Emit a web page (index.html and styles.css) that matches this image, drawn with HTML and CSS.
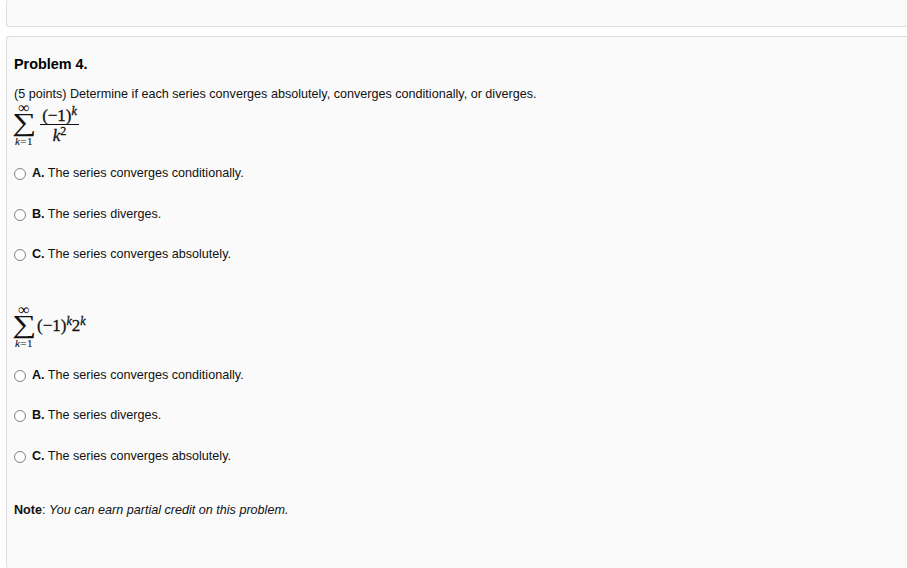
FILE: index.html
```html
<!DOCTYPE html>
<html lang="en">
<head>
    <meta charset="UTF-8">
    <title>Problem 4</title>
    <link rel="stylesheet" href="styles.css">
</head>
<body>

    <div class="card card-top"></div>

    <div class="card problem">
        <h4>Problem 4.</h4>
        <p class="intro">(5 points) Determine if each series converges absolutely, converges conditionally, or diverges.</p>

        <!-- First series -->
        <div class="math math-frac">
            <div class="sum">
                <span class="sum-top">∞</span>
                <span class="sigma">∑</span>
                <span class="sum-bottom"><i>k</i>=1</span>
            </div>
            <div class="frac">
                <span class="num">(−1)<sup><i>k</i></sup></span>
                <span class="den"><i>k</i><sup>2</sup></span>
            </div>
        </div>
        <div class="options">
            <label class="option"><input type="radio" name="q1"><span><b>A.</b> The series converges conditionally.</span></label>
            <label class="option"><input type="radio" name="q1"><span><b>B.</b> The series diverges.</span></label>
            <label class="option"><input type="radio" name="q1"><span><b>C.</b> The series converges absolutely.</span></label>
        </div>

        <!-- Second series -->
        <div class="math math-line">
            <div class="sum">
                <span class="sum-top">∞</span>
                <span class="sigma">∑</span>
                <span class="sum-bottom"><i>k</i>=1</span>
            </div>
            <div class="term">(−1)<sup><i>k</i></sup>2<sup><i>k</i></sup></div>
        </div>
        <div class="options">
            <label class="option"><input type="radio" name="q2"><span><b>A.</b> The series converges conditionally.</span></label>
            <label class="option"><input type="radio" name="q2"><span><b>B.</b> The series diverges.</span></label>
            <label class="option"><input type="radio" name="q2"><span><b>C.</b> The series converges absolutely.</span></label>
        </div>

        <p class="note"><b>Note</b>: <i>You can earn partial credit on this problem.</i></p>
    </div>

</body>
</html>
```

FILE: styles.css
```css
html, body {
    height: 100%;
    overflow: hidden;
}

body {
    display: flex;
    flex-direction: column;
    box-sizing: border-box;
    margin: 0;
    padding-left: 6px;
    background-color: #ffffff;
    font-family: "Liberation Sans", Arial, sans-serif;
    font-size: 12.6px;
    color: #111111;
}

.card {
    background-color: #fafafa;
    border: 1px solid #dddddd;
    border-right: none;
    border-radius: 3px 0 0 3px;
}

.card-top {
    flex: none;
    height: 26px;
    border-top: none;
    margin-bottom: 9px;
}

.problem {
    flex: 1;
    padding: 19px 7px 0;
    border-bottom: none;
}

h4 {
    margin: 0;
    font-size: 14.4px;
    line-height: 17px;
    font-weight: bold;
    color: #000000;
}

.intro {
    margin: 14px 0 0;
    line-height: 15px;
}

.math {
    display: flex;
    font-family: "Liberation Serif", serif;
    -webkit-text-stroke: 0.3px;
}

.math-frac {
    height: 46px;
}

.math-line {
    margin-top: 41.5px;
    height: 46px;
}

.sum {
    display: flex;
    flex-direction: column;
    align-items: center;
    width: 20px;
}

.sum-top {
    font-size: 16px;
    line-height: 11px;
    height: 11px;
    -webkit-text-stroke: 0;
}

.sigma {
    font-size: 26px;
    line-height: 20px;
    height: 23px;
    transform: scaleX(1.3);
    -webkit-text-stroke: 0;
}

.sum-bottom {
    font-size: 11px;
    line-height: 10px;
    letter-spacing: 0.5px;
    -webkit-text-stroke: 0.1px;
}

.frac {
    display: flex;
    flex-direction: column;
    align-items: center;
    margin-left: 6px;
    font-size: 17px;
    width: 39px;
}

.num {
    line-height: 27px;
    height: 22px;
    width: 100%;
    text-align: center;
    border-bottom: 1px solid #111111;
}

.den {
    line-height: 22px;
}

.term {
    font-size: 17px;
    line-height: 20px;
    margin-top: 12px;
    margin-left: 3px;
}

sup {
    font-size: 12px;
    line-height: 0;
    vertical-align: 6px;
}

.options {
    margin-top: 18px;
    display: flex;
    flex-direction: column;
    gap: 25.5px;
}

.option {
    display: flex;
    align-items: center;
    line-height: 15px;
}

.option input {
    appearance: none;
    box-sizing: border-box;
    margin: 1px 6px 0 0;
    width: 12px;
    height: 12px;
    background-color: #ffffff;
    border: 1px solid #808080;
    border-radius: 50%;
}

.note {
    margin: 39px 0 0;
    line-height: 15px;
}
```
